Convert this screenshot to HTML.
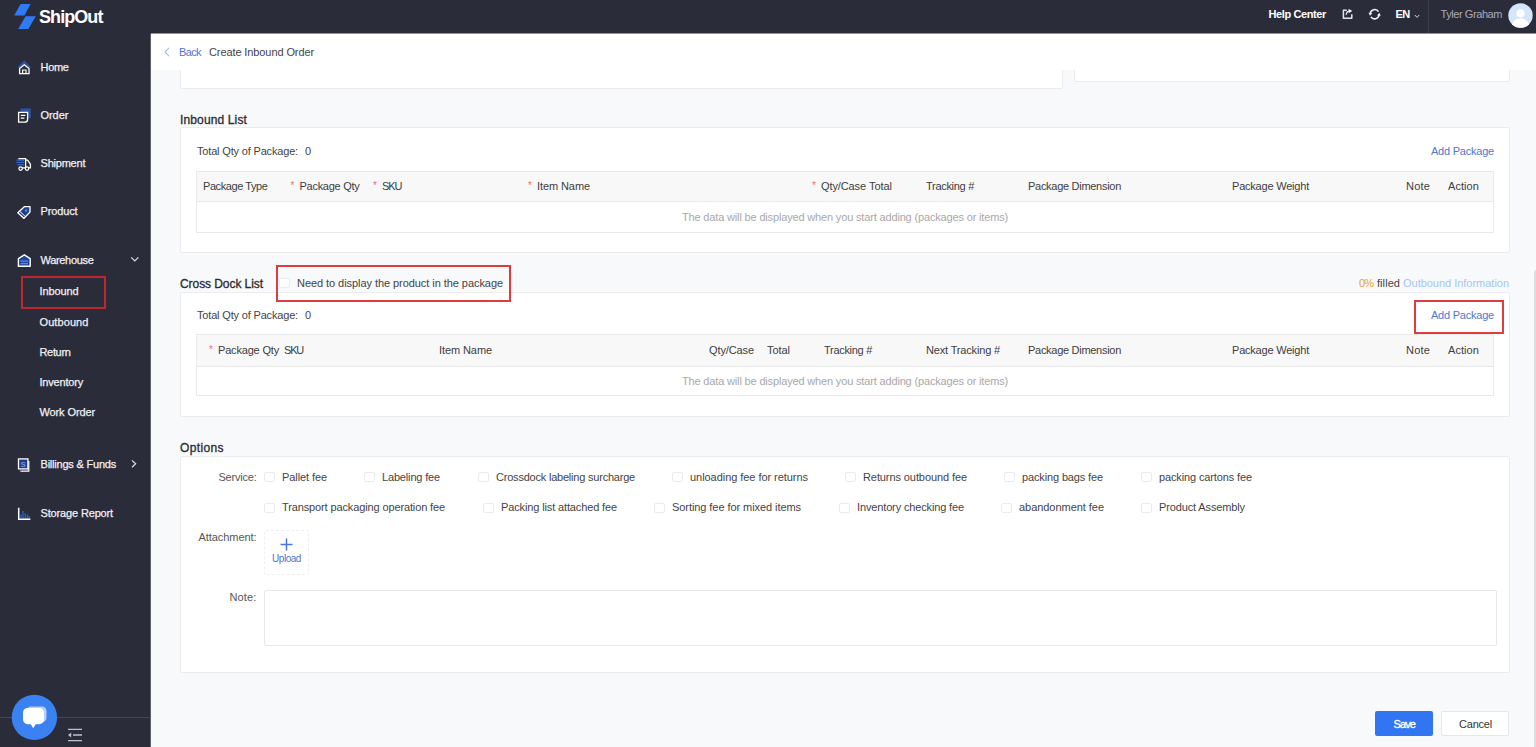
<!DOCTYPE html>
<html lang="en">
<head>
<meta charset="utf-8">
<title>ShipOut - Create Inbound Order</title>
<style>
*{box-sizing:border-box;margin:0;padding:0}
html,body{width:1536px;height:747px;overflow:hidden;background:#f8f9fb;font-family:"Liberation Sans",sans-serif;font-size:11px;color:#333}
a{text-decoration:none}
.t{position:absolute;white-space:pre;line-height:16px;height:16px;font-weight:normal;display:block}
b.t{font-weight:bold}
.abs{position:absolute}
#topbar{position:absolute;left:0;top:0;width:1536px;height:34px;background:#2b2c3a}
#sidebar{position:absolute;left:0;top:34px;width:151px;height:713px;background:#2b2c3a;border-right:1px solid #5e5f6b}
#sidebar .t,#topbar .t,#sidebar svg,#topbar svg{position:absolute}
#sidebar .t{margin-top:-34px}
#sidebar svg{margin-top:-34px}
#pagehead{position:absolute;left:151px;top:33px;width:1385px;height:37px;background:#fff;border-top:1px solid #8f9099}
#pagehead .t{margin-left:-151px;margin-top:-34px}
#pagehead svg{position:absolute}
#main{position:absolute;left:151px;top:70px;width:1385px;height:677px;background:#f8f9fb;overflow:hidden}
#main .t,#main .panel,#main .box,#main .cb,#main .tbl,#main .btn,#main svg{margin-left:-151px;margin-top:-70px}
#scroll{position:absolute;left:1529px;top:266px;width:7px;height:481px;background:#fafafb}
#scroll i{position:absolute;left:5px;top:4px;width:6px;bottom:0;background:#dedee1;border-radius:3px 0 0 0}
.panel{position:absolute;background:#fff;border:1px solid #ececee;border-radius:2px}
.tbl{position:absolute;border:1px solid #e9e9e9;background:#fff}
.tbl .hd{position:absolute;left:0;top:0;right:0;height:30px;background:#f8f8f8;border-bottom:1px solid #e9e9e9}
.cb{position:absolute;width:11px;height:10px;border:1px solid #e9ebef;border-radius:2px;background:#fff}
.hl{position:absolute;border:2px solid #e03c40;pointer-events:none}
.btn{position:absolute;height:25px;border-radius:2px}
</style>
</head>
<body>
<header id="topbar">
  <svg style="left:13px;top:3px" width="25" height="27" viewBox="0 0 25 27"><path d="M7.6 1 L17.6 1 L11.4 12.4 L1.2 12.4 Z M12.6 13.3 L22.8 13.3 L15.4 26 L5.2 26 Z" fill="#2f7bf6"/></svg>
<b class="t" style="left:39.00px;top:9.00px;font-size:18px;color:#fff;font-weight:bold;letter-spacing:-0.929px;">ShipOut</b>
<span class="t" style="left:1268.40px;top:6.00px;font-size:11px;color:#fff;font-weight:bold;letter-spacing:-0.377px;">Help Center</span>
<span class="t" style="left:1395.60px;top:6.00px;font-size:11px;color:#fff;font-weight:bold;letter-spacing:-0.641px;">EN</span>
<span class="t" style="left:1440.50px;top:6.00px;font-size:11px;color:#a9abb8;letter-spacing:-0.428px;">Tyler Graham</span>
  <svg style="left:1341px;top:8px" width="13" height="12" viewBox="0 0 13 12" fill="none" stroke="#e4e4ec" stroke-width="1.5"><path d="M5.800 2.200H2.400V10.200H10.800V6.200" stroke-linejoin="round"/><path d="M5.200 6.800C5.400 4.400 6.600 3.100 8.400 3.100" stroke-width="1.400"/><path d="M7.600 0.800L11.200 3.100L7.600 5.300Z" fill="#fff" stroke="none"/></svg>
  <svg style="left:1368px;top:8px" width="13" height="12" viewBox="0 0 13 12" fill="none" stroke="#f0f0f5" stroke-width="1.600"><path d="M2.300 5.800A4.400 4.300 0 0 1 10.500 3.700"/><path d="M11 6.800A4.400 4.300 0 0 1 2.900 8.900"/><path d="M0.500 4.800L4.200 5.200L2 7.800Z" fill="#f0f0f5" stroke="none"/><path d="M12.800 7.800L9.100 7.400L11.300 4.800Z" fill="#f0f0f5" stroke="none"/></svg>
  <svg style="left:1413.600px;top:13.800px" width="6" height="5" viewBox="0 0 6 5" fill="none" stroke="#d0d1da" stroke-width="1"><path d="M0.8 1L3 3.4L5.2 1"/></svg>
  <div class="abs" style="left:1428px;top:0;width:1px;height:34px;background:#3b3c4c"></div>
  <svg style="left:1508px;top:3px" width="25" height="25" viewBox="0 0 25 25"><defs><clipPath id="av"><circle cx="12.5" cy="12.5" r="12.2"/></clipPath></defs><circle cx="12.5" cy="12.5" r="12.2" fill="#d5e5fb"/><g clip-path="url(#av)" fill="#fff"><circle cx="12.5" cy="10.4" r="4.2"/><path d="M3.5 25C3.5 18.5 7.5 15.6 12.5 15.6S21.5 18.5 21.5 25Z"/></g></svg>
</header>

<aside id="sidebar">
  <nav>
<a class="t" style="left:40.50px;top:59.00px;font-size:11px;color:#f0f0f4;letter-spacing:-0.286px;-webkit-text-stroke:0.25px #f0f0f4;">Home</a>
<a class="t" style="left:40.50px;top:107.00px;font-size:11px;color:#f0f0f4;letter-spacing:-0.065px;-webkit-text-stroke:0.25px #f0f0f4;">Order</a>
<a class="t" style="left:40.50px;top:155.00px;font-size:11px;color:#f0f0f4;letter-spacing:-0.211px;-webkit-text-stroke:0.25px #f0f0f4;">Shipment</a>
<a class="t" style="left:40.50px;top:203.00px;font-size:11px;color:#f0f0f4;letter-spacing:-0.132px;-webkit-text-stroke:0.25px #f0f0f4;">Product</a>
<a class="t" style="left:40.50px;top:252.00px;font-size:11px;color:#f0f0f4;letter-spacing:-0.316px;-webkit-text-stroke:0.25px #f0f0f4;">Warehouse</a>
<a class="t" style="left:39.50px;top:283.00px;font-size:11px;color:#f0f0f4;letter-spacing:-0.109px;-webkit-text-stroke:0.25px #f0f0f4;">Inbound</a>
<a class="t" style="left:39.50px;top:314.00px;font-size:11px;color:#f0f0f4;letter-spacing:0.084px;-webkit-text-stroke:0.25px #f0f0f4;">Outbound</a>
<a class="t" style="left:39.50px;top:344.00px;font-size:11px;color:#f0f0f4;letter-spacing:-0.339px;-webkit-text-stroke:0.25px #f0f0f4;">Return</a>
<a class="t" style="left:39.50px;top:374.00px;font-size:11px;color:#f0f0f4;letter-spacing:-0.194px;-webkit-text-stroke:0.25px #f0f0f4;">Inventory</a>
<a class="t" style="left:39.50px;top:404.00px;font-size:11px;color:#f0f0f4;letter-spacing:-0.114px;-webkit-text-stroke:0.25px #f0f0f4;">Work Order</a>
<a class="t" style="left:40.50px;top:456.00px;font-size:11px;color:#f0f0f4;letter-spacing:-0.211px;-webkit-text-stroke:0.25px #f0f0f4;">Billings &amp; Funds</a>
<a class="t" style="left:40.50px;top:505.00px;font-size:11px;color:#f0f0f4;letter-spacing:-0.151px;-webkit-text-stroke:0.25px #f0f0f4;">Storage Report</a>
  </nav>

  <svg style="left:16px;top:59px" width="17" height="17" viewBox="0 0 17 17"><path d="M1 8.400L8.300 1.600L15.600 8.400Z" fill="#2a62c8" opacity=".75"/><path d="M3.600 9.400L8.300 5.600L13 9.400V15H3.600Z" fill="#2b2c3a"/><path d="M3.600 9.600L8.300 5.800L13 9.600V14.600H3.600Z" fill="none" stroke="#fff" stroke-width="1.300"/><path d="M6.600 14.600V11H10V14.600" fill="none" stroke="#fff" stroke-width="1.200"/></svg>
  <svg style="left:16px;top:107px" width="17" height="17" viewBox="0 0 17 17"><rect x="4.400" y="1.600" width="10.400" height="10" rx="1" fill="#2a5fc0" opacity=".8"/><path d="M2.600 5.300H11.600V12.400Q11.600 15.200 8.600 15.200H2.600Z" fill="#2b2c3a" stroke="#fff" stroke-width="1.300"/><path d="M4.800 8.400H9.400M4.800 11.200H8.400" stroke="#fff" stroke-width="1.200"/></svg>
  <svg style="left:16px;top:155px" width="17" height="17" viewBox="0 0 17 17"><path d="M0.400 5.200H8M0.400 7.400H8M1.400 9.600H8" stroke="#2d65cc" stroke-width="1.300"/><path d="M2.400 3.600H9.600V12.600" fill="none" stroke="#fff" stroke-width="1.300"/><path d="M9.600 5.200H11.600L14.400 9.200V12.800H3" fill="none" stroke="#fff" stroke-width="1.300"/><circle cx="4.600" cy="13.600" r="1.700" fill="#2b2c3a" stroke="#fff" stroke-width="1.200"/><circle cx="11" cy="13.600" r="1.700" fill="#2b2c3a" stroke="#fff" stroke-width="1.200"/></svg>
  <svg style="left:16px;top:203px" width="17" height="17" viewBox="0 0 17 17"><path d="M8.600 3.600H14V9L8 15.400L1.800 9.800Z" fill="#1f3f8a" stroke="#fff" stroke-width="1.300" stroke-linejoin="round"/><path d="M3.600 8.200L9.600 13.800" stroke="#fff" stroke-width="1"/><circle cx="10.200" cy="7.600" r="1.300" fill="#4a7de0"/></svg>
  <svg style="left:16px;top:251px" width="17" height="17" viewBox="0 0 17 17"><path d="M2.400 7.600L8.300 3.800L14.200 7.600V15.200H2.400Z" fill="#1f4696" stroke="#fff" stroke-width="1.400" stroke-linejoin="round"/><path d="M4.600 10.200H12M4.600 12.600H12" stroke="#5b8cf0" stroke-width="1.200"/></svg>
  <svg style="left:16px;top:456px" width="17" height="17" viewBox="0 0 17 17"><path d="M12.800 5V15.200H4.400" fill="none" stroke="#fff" stroke-width="1.200"/><rect x="2.500" y="2.900" width="9.400" height="10" fill="#1e3d86" stroke="#fff" stroke-width="1.300"/><text x="7.200" y="11" font-family="Liberation Sans, sans-serif" font-size="8" font-weight="bold" fill="#6e95e8" text-anchor="middle">S</text></svg>
  <svg style="left:16px;top:505px" width="17" height="17" viewBox="0 0 17 17"><path d="M5 14V9.600M7 14V6M9.200 14V8M11.400 14V9.600M13.200 14V11" stroke="#2b63cc" stroke-width="1.300"/><path d="M2.700 2.800V14.200H14.400" fill="none" stroke="#fff" stroke-width="1.500"/></svg>
  <svg style="left:130px;top:256px" width="10" height="7" viewBox="0 0 10 7" fill="none" stroke="#d9dae2" stroke-width="1.300"><path d="M1.200 1.400L4.800 4.900L8.400 1.400"/></svg>
  <svg style="left:130px;top:459px" width="8" height="10" viewBox="0 0 8 10" fill="none" stroke="#d9dae2" stroke-width="1.300"><path d="M2 1.400L5.600 4.800L2 8.200"/></svg>

  <div class="hl" style="left:21px;top:242px;width:85px;height:33px;border-color:#bd282e"></div>
  <div class="abs" style="left:0;top:682.5px;width:151px;height:1px;background:#444555"></div>
  <svg style="left:67px;top:727.500px" width="16" height="14" viewBox="0 0 16 14" fill="none" stroke="#bfc0ca" stroke-width="1.3"><path d="M1 1.4H15M6 7H15M1 12.6H15"/><path d="M4.200 4.600V9.400L1 7Z" fill="#bfc0ca" stroke="none"/></svg>
  <svg style="left:11px;top:694px" width="47" height="47" viewBox="0 0 47 47"><circle cx="23.400" cy="23.400" r="22.700" fill="#3a81f1"/><rect x="15.500" y="12.400" width="20" height="16" rx="4.600" fill="#fff" opacity=".62"/><path d="M16.600 14h11.800a4.600 4.600 0 0 1 4.600 4.600v7a4.600 4.600 0 0 1-4.600 4.600h-3.600l-2.600 4-2.400-4h-3.200a4.600 4.600 0 0 1-4.600-4.600v-7a4.600 4.600 0 0 1 4.600-4.600z" fill="#fff"/></svg>
</aside>

<div id="pagehead">
  <svg style="left:13px;top:13px" width="6" height="10" viewBox="0 0 6 10" fill="none" stroke="#a9bde4" stroke-width="1.1"><path d="M5 0.8L1 5L5 9.2"/></svg>
<a class="t" style="left:179.00px;top:44.00px;font-size:11px;color:#5076cc;letter-spacing:-0.617px;">Back</a>
<span class="t" style="left:209.00px;top:44.00px;font-size:11px;color:#444;letter-spacing:-0.101px;">Create Inbound Order</span>
</div>

<main id="main">
  <div class="panel" style="left:180px;top:20px;width:883px;height:69px"></div>
  <div class="panel" style="left:1074px;top:20px;width:436px;height:62px"></div>

  <section id="inbound">
    <div class="panel" style="left:180px;top:127px;width:1330px;height:126px"></div>
    <div class="tbl" style="left:196px;top:171px;width:1298px;height:62px"><div class="hd"></div></div>
<h3 class="t" style="left:180.00px;top:112.00px;font-size:12px;color:#2b2b2b;letter-spacing:0.134px;-webkit-text-stroke:0.3px #2b2b2b;">Inbound List</h3>
<span class="t" style="left:197.00px;top:143.00px;font-size:11px;color:#444;letter-spacing:-0.170px;">Total Qty of Package:</span>
<span class="t" style="left:305.00px;top:143.00px;font-size:11px;color:#444;letter-spacing:-0.120px;">0</span>
<a class="t" style="left:1431.00px;top:143.00px;font-size:11px;color:#5076cc;letter-spacing:-0.222px;">Add Package</a>
<span class="t" style="left:203.00px;top:178.00px;font-size:11px;color:#3d3d3d;letter-spacing:-0.418px;">Package Type</span>
<i class="t" style="left:290.50px;top:177.50px;font-size:10px;color:#f56c6c;font-style:normal;">*</i>
<span class="t" style="left:299.50px;top:178.00px;font-size:11px;color:#3d3d3d;letter-spacing:-0.271px;">Package Qty</span>
<i class="t" style="left:373.00px;top:177.50px;font-size:10px;color:#f56c6c;font-style:normal;">*</i>
<span class="t" style="left:382.00px;top:178.00px;font-size:11px;color:#3d3d3d;letter-spacing:-1.108px;">SKU</span>
<i class="t" style="left:528.00px;top:177.50px;font-size:10px;color:#f56c6c;font-style:normal;">*</i>
<span class="t" style="left:537.00px;top:178.00px;font-size:11px;color:#3d3d3d;letter-spacing:-0.089px;">Item Name</span>
<i class="t" style="left:812.00px;top:177.50px;font-size:10px;color:#f56c6c;font-style:normal;">*</i>
<span class="t" style="left:821.00px;top:178.00px;font-size:11px;color:#3d3d3d;letter-spacing:-0.107px;">Qty/Case</span>
<span class="t" style="left:869.00px;top:178.00px;font-size:11px;color:#3d3d3d;letter-spacing:-0.050px;">Total</span>
<span class="t" style="left:926.00px;top:178.00px;font-size:11px;color:#3d3d3d;letter-spacing:-0.295px;">Tracking #</span>
<span class="t" style="left:1028.00px;top:178.00px;font-size:11px;color:#3d3d3d;letter-spacing:-0.285px;">Package Dimension</span>
<span class="t" style="left:1232.00px;top:178.00px;font-size:11px;color:#3d3d3d;letter-spacing:-0.208px;">Package Weight</span>
<span class="t" style="left:1406.00px;top:178.00px;font-size:11px;color:#3d3d3d;letter-spacing:0.188px;">Note</span>
<span class="t" style="left:1448.00px;top:178.00px;font-size:11px;color:#3d3d3d;letter-spacing:0.070px;">Action</span>
<span class="t" style="left:682.00px;top:209.00px;font-size:11px;color:#a8a8a8;letter-spacing:-0.160px;">The data will be displayed when you start adding (packages or items)</span>
  </section>

  <section id="crossdock">
    <div class="panel" style="left:180px;top:292px;width:1330px;height:125px"></div>
    <div class="tbl" style="left:196px;top:334px;width:1298px;height:62px"><div class="hd" style="height:32px"></div></div>
    <i class="cb" style="left:279px;top:278px"></i>
<h3 class="t" style="left:180.00px;top:275.50px;font-size:12px;color:#2b2b2b;letter-spacing:-0.069px;-webkit-text-stroke:0.3px #2b2b2b;">Cross Dock List</h3>
<span class="t" style="left:297.00px;top:275.00px;font-size:11px;color:#444;letter-spacing:-0.060px;">Need to display the product in the package</span>
<span class="t" style="left:1359.00px;top:275.00px;font-size:11px;color:#e6a23c;letter-spacing:-0.953px;">0%</span>
<span class="t" style="left:1377.00px;top:275.00px;font-size:11px;color:#444;letter-spacing:0.062px;">filled</span>
<a class="t" style="left:1403.00px;top:275.00px;font-size:11px;color:#a3c6f3;letter-spacing:-0.020px;">Outbound Information</a>
<span class="t" style="left:197.00px;top:307.00px;font-size:11px;color:#444;letter-spacing:-0.170px;">Total Qty of Package:</span>
<span class="t" style="left:305.00px;top:307.00px;font-size:11px;color:#444;letter-spacing:-0.120px;">0</span>
<a class="t" style="left:1431.00px;top:307.00px;font-size:11px;color:#5076cc;letter-spacing:-0.222px;">Add Package</a>
<i class="t" style="left:209.00px;top:341.50px;font-size:10px;color:#f56c6c;font-style:normal;">*</i>
<span class="t" style="left:218.00px;top:342.00px;font-size:11px;color:#3d3d3d;letter-spacing:-0.180px;">Package Qty</span>
<span class="t" style="left:284.00px;top:342.00px;font-size:11px;color:#3d3d3d;letter-spacing:-1.208px;">SKU</span>
<span class="t" style="left:439.00px;top:342.00px;font-size:11px;color:#3d3d3d;letter-spacing:-0.089px;">Item Name</span>
<span class="t" style="left:709.00px;top:342.00px;font-size:11px;color:#3d3d3d;letter-spacing:-0.107px;">Qty/Case</span>
<span class="t" style="left:767.00px;top:342.00px;font-size:11px;color:#3d3d3d;letter-spacing:-0.050px;">Total</span>
<span class="t" style="left:824.00px;top:342.00px;font-size:11px;color:#3d3d3d;letter-spacing:-0.295px;">Tracking #</span>
<span class="t" style="left:926.00px;top:342.00px;font-size:11px;color:#3d3d3d;letter-spacing:-0.161px;">Next Tracking #</span>
<span class="t" style="left:1028.00px;top:342.00px;font-size:11px;color:#3d3d3d;letter-spacing:-0.285px;">Package Dimension</span>
<span class="t" style="left:1232.00px;top:342.00px;font-size:11px;color:#3d3d3d;letter-spacing:-0.208px;">Package Weight</span>
<span class="t" style="left:1406.00px;top:342.00px;font-size:11px;color:#3d3d3d;letter-spacing:0.188px;">Note</span>
<span class="t" style="left:1448.00px;top:342.00px;font-size:11px;color:#3d3d3d;letter-spacing:0.070px;">Action</span>
<span class="t" style="left:682.00px;top:373.00px;font-size:11px;color:#a8a8a8;letter-spacing:-0.160px;">The data will be displayed when you start adding (packages or items)</span>
    <div class="hl" style="left:276px;top:265px;width:235px;height:37px;margin-left:-151px;margin-top:-70px"></div>
    <div class="hl" style="left:1414px;top:300px;width:90px;height:34px;margin-left:-151px;margin-top:-70px"></div>
  </section>

  <section id="options">
    <div class="panel" style="left:180px;top:456px;width:1330px;height:217px"></div>
<i class="cb" style="left:264px;top:472px"></i>
<i class="cb" style="left:364px;top:472px"></i>
<i class="cb" style="left:478px;top:472px"></i>
<i class="cb" style="left:672px;top:472px"></i>
<i class="cb" style="left:845px;top:472px"></i>
<i class="cb" style="left:1004px;top:472px"></i>
<i class="cb" style="left:1141px;top:472px"></i>
<i class="cb" style="left:264px;top:502.5px"></i>
<i class="cb" style="left:483px;top:502.5px"></i>
<i class="cb" style="left:654px;top:502.5px"></i>
<i class="cb" style="left:839px;top:502.5px"></i>
<i class="cb" style="left:1001px;top:502.5px"></i>
<i class="cb" style="left:1141px;top:502.5px"></i>
    <div class="box abs" style="left:264px;top:530px;width:45px;height:45px;border:1px dashed #eff0f3;border-radius:2px;background:#fff"></div>
    <svg class="abs" style="left:280px;top:538px" width="13" height="13" viewBox="0 0 13 13" stroke="#4a78d8" stroke-width="1.5"><path d="M6.500 0.500V12.500M0.500 6.500H12.500"/></svg>
    <div class="box abs" style="left:264px;top:590px;width:1233px;height:56px;border:1px solid #e6e7eb;border-radius:2px;background:#fff"></div>
<h3 class="t" style="left:180.00px;top:440.00px;font-size:12px;color:#2b2b2b;letter-spacing:0.377px;-webkit-text-stroke:0.3px #2b2b2b;">Options</h3>
<label class="t" style="left:218.50px;top:469.00px;font-size:11px;color:#555;letter-spacing:-0.219px;">Service:</label>
<label class="t" style="left:198.50px;top:529.00px;font-size:11px;color:#555;letter-spacing:-0.064px;">Attachment:</label>
<label class="t" style="left:229.50px;top:589.00px;font-size:11px;color:#555;letter-spacing:0.141px;">Note:</label>
<span class="t" style="left:272.00px;top:551.00px;font-size:10px;color:#5076cc;letter-spacing:-0.451px;">Upload</span>
<label class="t" style="left:282.00px;top:469.00px;font-size:11px;color:#444;letter-spacing:-0.087px;">Pallet fee</label>
<label class="t" style="left:382.00px;top:469.00px;font-size:11px;color:#444;letter-spacing:-0.163px;">Labeling fee</label>
<label class="t" style="left:496.00px;top:469.00px;font-size:11px;color:#444;letter-spacing:-0.211px;">Crossdock labeling surcharge</label>
<label class="t" style="left:690.00px;top:469.00px;font-size:11px;color:#444;letter-spacing:-0.050px;">unloading fee for returns</label>
<label class="t" style="left:863.00px;top:469.00px;font-size:11px;color:#444;letter-spacing:-0.091px;">Returns outbound fee</label>
<label class="t" style="left:1022.00px;top:469.00px;font-size:11px;color:#444;letter-spacing:-0.136px;">packing bags fee</label>
<label class="t" style="left:1159.00px;top:469.00px;font-size:11px;color:#444;letter-spacing:-0.126px;">packing cartons fee</label>
<label class="t" style="left:282.00px;top:498.50px;font-size:11px;color:#444;letter-spacing:-0.126px;">Transport packaging operation fee</label>
<label class="t" style="left:501.00px;top:498.50px;font-size:11px;color:#444;letter-spacing:-0.130px;">Packing list attached fee</label>
<label class="t" style="left:672.00px;top:498.50px;font-size:11px;color:#444;letter-spacing:-0.068px;">Sorting fee for mixed items</label>
<label class="t" style="left:857.00px;top:498.50px;font-size:11px;color:#444;letter-spacing:-0.140px;">Inventory checking fee</label>
<label class="t" style="left:1019.00px;top:498.50px;font-size:11px;color:#444;letter-spacing:-0.043px;">abandonment fee</label>
<label class="t" style="left:1159.00px;top:498.50px;font-size:11px;color:#444;letter-spacing:-0.128px;">Product Assembly</label>
  </section>

  <footer>
    <div class="btn" style="left:1375px;top:711px;width:58px;background:#3275f2"></div>
    <div class="btn" style="left:1441px;top:711px;width:68px;background:#fff;border:1px solid #e6e7eb"></div>
<span class="t" style="left:1393.50px;top:716.00px;font-size:11px;color:#fff;letter-spacing:-0.895px;-webkit-text-stroke:0.35px #fff;">Save</span>
<span class="t" style="left:1459.00px;top:716.00px;font-size:11px;color:#333;letter-spacing:-0.208px;">Cancel</span>
  </footer>
</main>
<div id="scroll"><i></i></div>
</body>
</html>
